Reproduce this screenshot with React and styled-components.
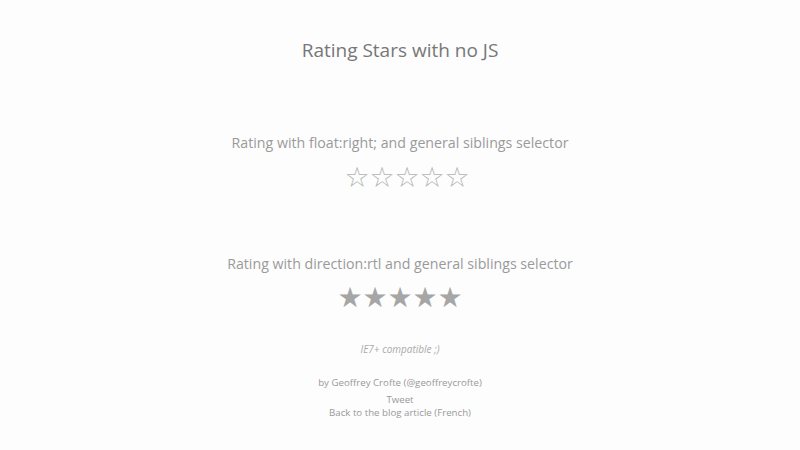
import React from 'react'
import styled, { createGlobalStyle } from 'styled-components';

const GlobalStyle = createGlobalStyle`
    html, body {
        margin: 0;
        padding: 0;
        background: #fdfdfd;
    }
    body {
        font-family: "Open Sans", "Noto Sans", sans-serif;
        color: #888;
    }
`;

const Page = styled.div`
    width: 800px;
    height: 450px;
    display: flex;
    flex-direction: column;
    align-items: center;
    padding-top: 36px;
    box-sizing: border-box;
`;

const Title = styled.h1`
    margin: 0;
    font-size: 19px;
    font-weight: 400;
    color: #777;
    line-height: 28px;
`;

const Section = styled.section`
    display: flex;
    flex-direction: column;
    align-items: center;
    margin-top: ${props => props.$top}px;
`;

const Heading = styled.h2`
    margin: 0;
    font-size: 14.2px;
    font-weight: 400;
    color: #9a9a9a;
    line-height: 20px;
`;

const Stars = styled.div`
    display: flex;
    direction: ${props => props.$rtl ? 'rtl' : 'ltr'};
    margin-top: ${props => props.$gap}px;
    padding-left: ${props => props.$shift || 0}px;
`;

const Star = styled.span`
    width: 25px;
    text-align: center;
    font-family: "DejaVu Sans", sans-serif;
    font-size: 28px;
    line-height: 28px;
    color: ${props => props.$filled ? '#a6a6a6' : '#b4b4b4'};
    cursor: pointer;
`;

const Note = styled.p`
    margin: 30px 0 0;
    font-size: 10px;
    line-height: 14px;
    font-style: italic;
    color: #aaa;
`;

const Footer = styled.footer`
    margin-top: 20px;
    display: flex;
    flex-direction: column;
    align-items: center;
    font-size: 9.7px;
    line-height: 13px;
    color: #999;
`;

const Credit = styled.p`
    margin: 0 0 4px;
`;

const Link = styled.a`
    color: #999;
    text-decoration: none;
`;

const Rating = ({ filled, rtl, gap, shift }) => (
    <Stars $rtl={rtl} $gap={gap} $shift={shift}>
        {[5, 4, 3, 2, 1].map(n => (
            <Star key={n} $filled={filled} title={`${n} stars`}>
                {filled ? '★' : '☆'}
            </Star>
        ))}
    </Stars>
)

const App = () => {
  return (
    <Page>
        <GlobalStyle />
        <Title>Rating Stars with no JS</Title>

        <Section $top={69}>
            <Heading>Rating with float:right; and general siblings selector</Heading>
            <Rating gap={11} shift={14} />
        </Section>

        <Section $top={62}>
            <Heading>Rating with direction:rtl and general siblings selector</Heading>
            <Rating filled rtl gap={10} />
        </Section>

        <Note>IE7+ compatible ;)</Note>

        <Footer>
            <Credit>by Geoffrey Crofte (@geoffreycrofte)</Credit>
            <Link>Tweet</Link>
            <Link>Back to the blog article (French)</Link>
        </Footer>
    </Page>
  )
}

export default App
